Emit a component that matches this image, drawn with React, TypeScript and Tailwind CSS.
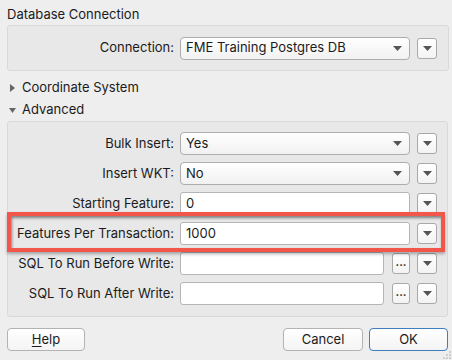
import type { ReactNode } from 'react';

function Arrow() {
  return (
    <svg width="9" height="5" viewBox="0 0 9 5" className="shrink-0">
      <path d="M0 0 L9 0 L4.5 5 Z" fill="#555" />
    </svg>
  );
}

function Combo({ value, width = 'w-[230px]' }: { value: string; width?: string }) {
  return (
    <div
      className={`${width} h-[23px] flex items-center justify-between pl-[5px] pr-[7px] rounded-[4px] border border-[#adadad] bg-gradient-to-b from-white to-[#f1f1f1]`}
    >
      <span>{value}</span>
      <Arrow />
    </div>
  );
}

function Field({ value = '', width = 'w-[230px]' }: { value?: string; width?: string }) {
  return (
    <div
      className={`${width} h-[23px] flex items-center pl-[5px] rounded-[3px] border border-[#b5b5b5] bg-white`}
    >
      {value}
    </div>
  );
}

function MenuButton() {
  return (
    <div className="w-[20px] h-[21px] flex items-center justify-center rounded-[3px] border border-[#a9a9a9] bg-gradient-to-b from-white to-[#f3f3f3]">
      <Arrow />
    </div>
  );
}

function DotsButton() {
  return (
    <div className="w-[18px] h-[21px] flex items-center justify-center rounded-[3px] border border-[#a9a9a9] bg-gradient-to-b from-white to-[#f3f3f3] text-[11px] font-bold leading-none pb-[3px]">
      ...
    </div>
  );
}

function Row({ label, children }: { label: string; children: ReactNode }) {
  return (
    <div className="flex items-center h-[23px]">
      <div className="w-[172px] text-right pr-[6px] whitespace-nowrap">{label}</div>
      {children}
    </div>
  );
}

function Section({ label, open }: { label: string; open?: boolean }) {
  return (
    <div className="flex items-center h-[22px] pl-[9px] gap-[6px]">
      {open ? (
        <svg width="7" height="5" viewBox="0 0 7 5">
          <path d="M0 0 L7 0 L3.5 5 Z" fill="#666" />
        </svg>
      ) : (
        <svg width="5" height="8" viewBox="0 0 5 8" className="ml-[1px] mr-[1px]">
          <path d="M0 0 L5 4 L0 8 Z" fill="#666" />
        </svg>
      )}
      <span>{label}</span>
    </div>
  );
}

export default function App() {
  return (
    <div
      className="relative w-[452px] h-[360px] bg-[#eeeeee] text-[13px] text-[#1b1b1b] overflow-hidden"
      style={{ fontFamily: 'Inter, "Liberation Sans", Arial, sans-serif' }}
    >
      <div className="h-[25px] pl-[7px] pt-[5px]">Database Connection</div>

      <div className="ml-[7px] mr-[3px] h-[46px] flex items-center border border-[#d9d9d9] rounded-[3px] bg-[#e8e8e8]">
        <Row label="Connection:">
          <Combo value="FME Training Postgres DB" />
          <div className="ml-[7px]">
            <MenuButton />
          </div>
        </Row>
      </div>

      <div className="pt-[6px]">
        <Section label="Coordinate System" />
        <Section label="Advanced" open />
      </div>

      <div className="ml-[7px] mr-[4px] h-[196px] border border-[#d9d9d9] rounded-[3px] bg-[#e8e8e8] pt-[10px] flex flex-col gap-[7px]">
        <Row label="Bulk Insert:">
          <Combo value="Yes" />
          <div className="ml-[7px]">
            <MenuButton />
          </div>
        </Row>
        <Row label="Insert WKT:">
          <Combo value="No" />
          <div className="ml-[7px]">
            <MenuButton />
          </div>
        </Row>
        <Row label="Starting Feature:">
          <Field value="0" />
          <div className="ml-[7px]">
            <MenuButton />
          </div>
        </Row>
        <Row label="Features Per Transaction:">
          <Field value="1000" />
          <div className="ml-[7px]">
            <MenuButton />
          </div>
        </Row>
        <Row label="SQL To Run Before Write:">
          <Field width="w-[204px]" />
          <div className="ml-[8px]">
            <DotsButton />
          </div>
          <div className="ml-[7px]">
            <MenuButton />
          </div>
        </Row>
        <Row label="SQL To Run After Write:">
          <Field width="w-[204px]" />
          <div className="ml-[8px]">
            <DotsButton />
          </div>
          <div className="ml-[7px]">
            <MenuButton />
          </div>
        </Row>
      </div>

      <div className="mt-[11px] ml-[7px] mr-[4px] flex items-center">
        <button
          type="button"
          className="w-[78px] h-[23px] rounded-[4px] border border-[#b3b3b3] bg-gradient-to-b from-white to-[#f4f4f4]"
        >
          <span className="underline underline-offset-2">H</span>elp
        </button>
        <div className="flex-1" />
        <button
          type="button"
          className="w-[80px] h-[23px] rounded-[4px] border border-[#b3b3b3] bg-gradient-to-b from-white to-[#f4f4f4]"
        >
          Cancel
        </button>
        <button
          type="button"
          className="ml-[6px] w-[79px] h-[23px] rounded-[4px] border border-[#3f7fc0] bg-gradient-to-b from-white to-[#f4f4f4]"
        >
          OK
        </button>
      </div>

      {/* annotation highlight */}
      <div className="absolute left-[7px] top-[212px] w-[438px] h-[40px] border-[4px] border-[#f2564b] shadow-[inset_1px_2px_3px_rgba(0,0,0,0.45),0_2px_3px_rgba(0,0,0,0.3)]" />

      {/* resize grip */}
      <svg width="8" height="8" viewBox="0 0 8 8" className="absolute right-[1px] bottom-[1px]">
        <circle cx="7" cy="1" r="0.7" fill="#999" />
        <circle cx="4" cy="4" r="0.7" fill="#999" />
        <circle cx="7" cy="4" r="0.7" fill="#999" />
        <circle cx="1" cy="7" r="0.7" fill="#999" />
        <circle cx="4" cy="7" r="0.7" fill="#999" />
        <circle cx="7" cy="7" r="0.7" fill="#999" />
      </svg>
    </div>
  );
}
